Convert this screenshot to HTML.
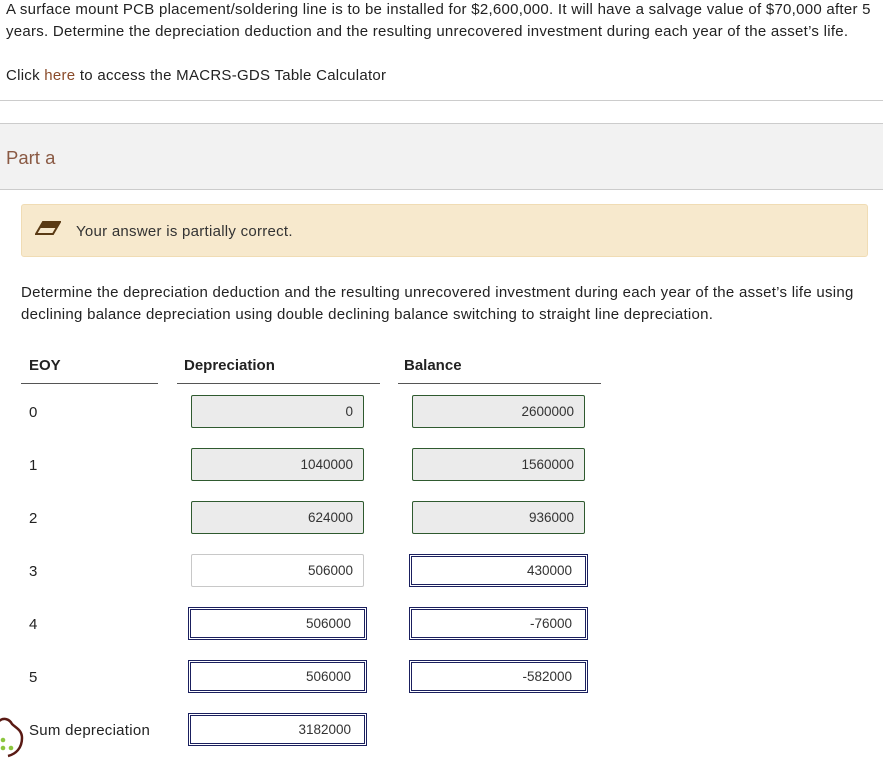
<!DOCTYPE html>
<html><head><style>
body{margin:0;width:883px;height:760px;background:#fff;font-family:"Liberation Sans",sans-serif;color:#222;position:relative;overflow:hidden}
.a{position:absolute;white-space:nowrap}
.t{font-size:15px;letter-spacing:0.27px}
.box{position:absolute;box-sizing:border-box;font-size:13.5px;text-align:right;padding-right:10px;color:#333}
.g{background:#ebebeb;border:1px solid #2f5a2f;border-radius:2px;width:173px;height:33px;line-height:31px}
.w{background:#fff;border:1px solid #c8c8c8;border-radius:2px;width:173px;height:33px;line-height:31px}
.d{background:#fff;border:3px double #1a1f5e;width:179px;height:33px;line-height:27px;padding-right:13px}
.hd{font-size:15px;font-weight:bold;color:#222}
.ul{position:absolute;height:1px;background:#555;top:383px}
</style></head><body>
<div class="a t" style="left:6px;top:1px">A surface mount PCB placement/soldering line is to be installed for $2,600,000. It will have a salvage value of $70,000 after 5</div>
<div class="a t" style="left:6px;top:23px">years. Determine the depreciation deduction and the resulting unrecovered investment during each year of the asset’s life.</div>
<div class="a t" style="left:6px;top:67px">Click <span style="color:#8a4b2a">here</span> to access the MACRS-GDS Table Calculator</div>
<div class="a" style="left:0;top:100px;width:883px;height:1px;background:#ccc"></div>
<div class="a" style="left:0;top:123px;width:883px;height:65px;background:#f2f2f2;border-top:1px solid #ccc;border-bottom:1px solid #ccc"></div>
<div class="a" style="left:6px;top:147px;font-size:18.5px;color:#8a5a44">Part a</div>
<div class="a" style="left:21px;top:204px;width:847px;height:53px;background:#f7e9cd;border:1px solid #f0dcb4;border-radius:3px;box-sizing:border-box"></div>
<svg class="a" style="left:35px;top:221px" width="26" height="14" viewBox="0 0 26 14"><path d="M8 1 L25 1 L18 13 L1 13 Z" fill="none" stroke="#5a3a14" stroke-width="2"/><path d="M8 1 L25 1 L21 7 L4 7 Z" fill="#5a3a14"/></svg>
<div class="a t" style="left:76px;top:223px;color:#333">Your answer is partially correct.</div>
<div class="a t" style="left:21px;top:284px">Determine the depreciation deduction and the resulting unrecovered investment during each year of the asset’s life using</div>
<div class="a t" style="left:21px;top:306px">declining balance depreciation using double declining balance switching to straight line depreciation.</div>
<div class="a hd" style="left:29px;top:357px">EOY</div>
<div class="a hd" style="left:184px;top:357px">Depreciation</div>
<div class="a hd" style="left:404px;top:357px">Balance</div>
<div class="ul" style="left:21px;width:137px"></div>
<div class="ul" style="left:177px;width:203px"></div>
<div class="ul" style="left:398px;width:203px"></div>

<div class="a t" style="left:29px;top:404px">0</div>
<div class="box g" style="left:191px;top:395px">0</div>
<div class="box g" style="left:412px;top:395px">2600000</div>
<div class="a t" style="left:29px;top:457px">1</div>
<div class="box g" style="left:191px;top:448px">1040000</div>
<div class="box g" style="left:412px;top:448px">1560000</div>
<div class="a t" style="left:29px;top:510px">2</div>
<div class="box g" style="left:191px;top:501px">624000</div>
<div class="box g" style="left:412px;top:501px">936000</div>
<div class="a t" style="left:29px;top:563px">3</div>
<div class="box w" style="left:191px;top:554px">506000</div>
<div class="box d" style="left:409px;top:554px">430000</div>
<div class="a t" style="left:29px;top:616px">4</div>
<div class="box d" style="left:188px;top:607px">506000</div>
<div class="box d" style="left:409px;top:607px">-76000</div>
<div class="a t" style="left:29px;top:669px">5</div>
<div class="box d" style="left:188px;top:660px">506000</div>
<div class="box d" style="left:409px;top:660px">-582000</div>
<div class="a t" style="left:29px;top:722px">Sum depreciation</div>
<div class="box d" style="left:188px;top:713px">3182000</div>
<svg class="a" style="left:0;top:716px" width="28" height="44" viewBox="0 0 28 44"><path d="M-2 6 C4 0 10 4 12 8 C16 12 22 14 22 22 C22 32 16 38 8 40" fill="none" stroke="#5a1a14" stroke-width="2.5"/><circle cx="3" cy="24" r="2.3" fill="#8cc63f"/><circle cx="3" cy="32" r="2.3" fill="#8cc63f"/><circle cx="11" cy="32" r="2.3" fill="#8cc63f"/></svg>
</body></html>
